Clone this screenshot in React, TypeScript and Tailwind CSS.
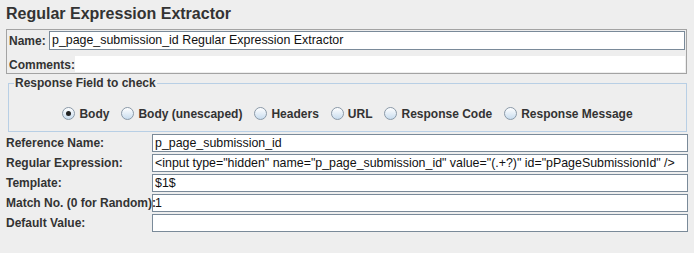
const RADIOS = [
  "Body",
  "Body (unescaped)",
  "Headers",
  "URL",
  "Response Code",
  "Response Message",
];

const FIELDS = [
  { label: "Reference Name:", value: "p_page_submission_id" },
  {
    label: "Regular Expression:",
    value:
      '<input type="hidden" name="p_page_submission_id" value="(.+?)" id="pPageSubmissionId" />',
  },
  { label: "Template:", value: "$1$" },
  { label: "Match No. (0 for Random):", value: "1" },
  { label: "Default Value:", value: "" },
];

function Radio({ label, checked }: { label: string; checked?: boolean }) {
  return (
    <label className="flex items-center gap-[4px]">
      <span className="flex h-[13px] w-[13px] items-center justify-center rounded-full border border-[#8a99a8] bg-gradient-to-b from-[#ffffff] to-[#c8dcee]">
        {checked && <span className="h-[5px] w-[5px] rounded-full bg-[#222222]" />}
      </span>
      <span className="font-bold">{label}</span>
    </label>
  );
}

export default function App() {
  return (
    <div className="h-[253px] w-[694px] bg-[#eeeeee] text-[12px] leading-[14px] text-[#333333] [font-family:'Liberation_Sans',Arial,sans-serif]">
      {/* TITLE */}
      <h1 className="px-[6px] pt-[4px] text-[16px] font-bold leading-[19px]">
        Regular Expression Extractor
      </h1>

      {/* NAME / COMMENTS */}
      <div className="mx-[6px] mt-[6px] w-[681px] border border-[#a3a3a3] p-[1px]">
        <div className="flex items-center">
          <span className="w-[41px] pl-[1px] font-bold">Name:</span>
          <div className="h-[19px] flex-1 border border-[#7a8a99] bg-white pl-[2px] text-[12.4px] leading-[17px] text-[#111111]">
            p_page_submission_id Regular Expression Extractor
          </div>
        </div>
        <div className="mt-[5px] flex items-center">
          <span className="w-[67px] shrink-0 whitespace-nowrap pl-[1px] pt-[3px] font-bold">Comments:</span>
          <div className="h-[16px] flex-1 bg-white" />
        </div>
      </div>

      {/* RESPONSE FIELD */}
      <fieldset className="mx-[8px] mt-[2px] w-[679px] border border-[#b8cfe5]">
        <legend className="ml-[5px] px-[1px] font-bold">Response Field to check</legend>
        <div className="flex h-[41px] items-center justify-center gap-[12px] pt-[6px]">
          {RADIOS.map((r, i) => (
            <Radio key={r} label={r} checked={i === 0} />
          ))}
        </div>
      </fieldset>

      {/* FIELDS */}
      <div className="mt-[2px] flex flex-col gap-[2px] pl-[6px]">
        {FIELDS.map((f) => (
          <div key={f.label} className="flex items-center">
            <span className="relative z-10 w-[146px] shrink-0 whitespace-nowrap font-bold">
              {f.label}
            </span>
            <div className="h-[18px] w-[536px] overflow-hidden whitespace-nowrap border border-[#7a8a99] bg-white pl-[2px] text-[12.4px] leading-[16px] text-[#111111]">
              {f.value}
            </div>
          </div>
        ))}
      </div>
    </div>
  );
}
